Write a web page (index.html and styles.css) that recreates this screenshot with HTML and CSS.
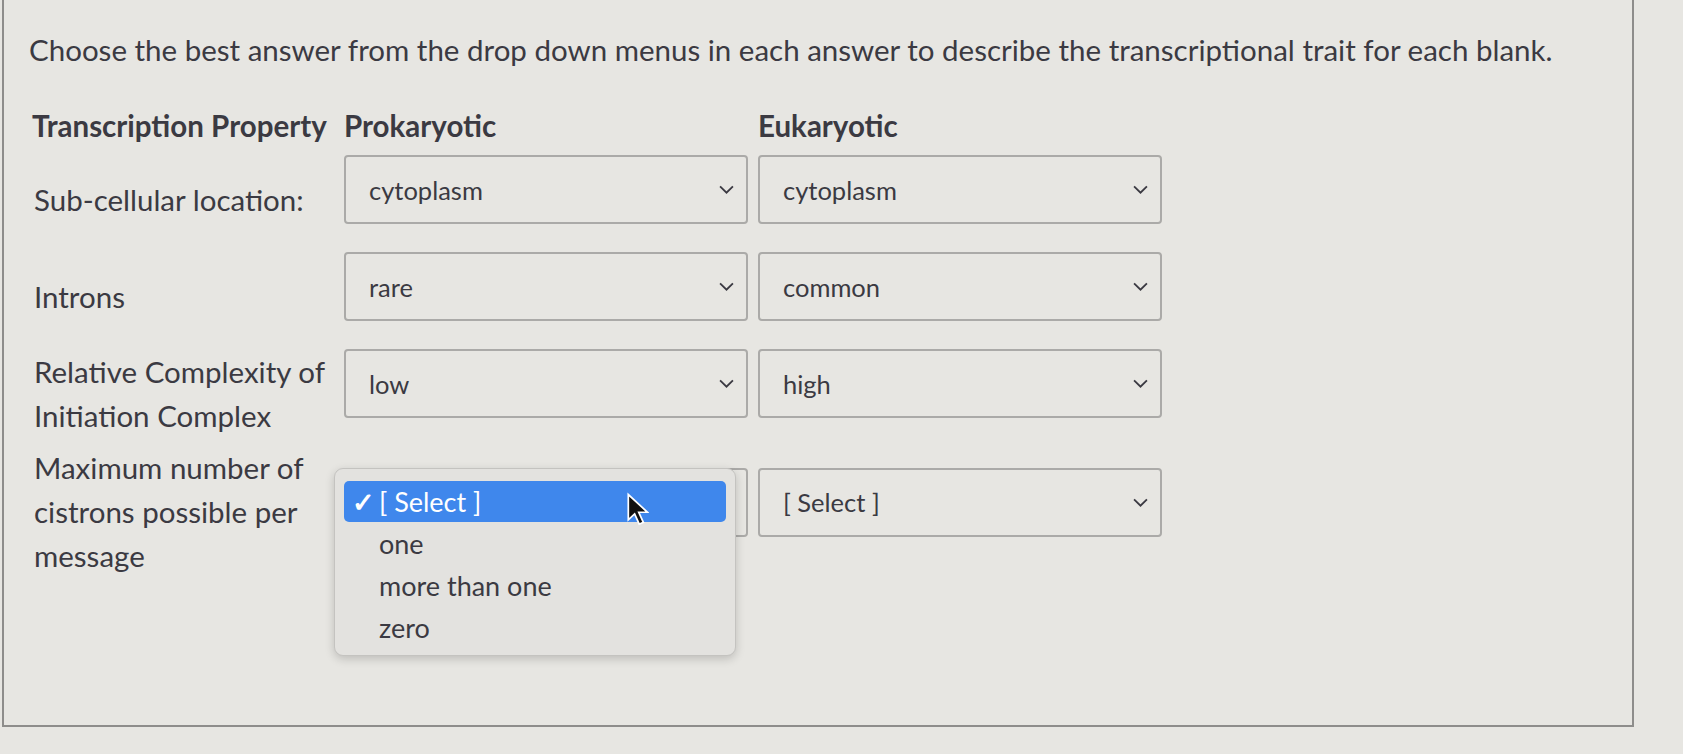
FILE: index.html
```html
<!DOCTYPE html>
<html lang="en">

<head>
    <meta charset="UTF-8">
    <meta name="viewport" content="width=device-width, initial-scale=1.0">
    <title>Transcription Quiz</title>
    <link rel="stylesheet" href="styles.css">
</head>

<body>
    <div class="question">
        <p class="prompt">Choose the best answer from the drop down menus in each answer to describe the transcriptional trait for each blank.</p>

        <div class="grid">
            <div class="head">Transcription Property</div>
            <div class="head">Prokaryotic</div>
            <div class="head">Eukaryotic</div>

            <div class="label">Sub-cellular location:</div>
            <div class="select"><span>cytoplasm</span><svg class="chev" viewBox="0 0 14 8"><path d="M1 1l6 6 6-6" /></svg></div>
            <div class="select"><span>cytoplasm</span><svg class="chev" viewBox="0 0 14 8"><path d="M1 1l6 6 6-6" /></svg></div>

            <div class="label">Introns</div>
            <div class="select"><span>rare</span><svg class="chev" viewBox="0 0 14 8"><path d="M1 1l6 6 6-6" /></svg></div>
            <div class="select"><span>common</span><svg class="chev" viewBox="0 0 14 8"><path d="M1 1l6 6 6-6" /></svg></div>

            <div class="label">Relative Complexity of<br>Initiation Complex</div>
            <div class="select"><span>low</span><svg class="chev" viewBox="0 0 14 8"><path d="M1 1l6 6 6-6" /></svg></div>
            <div class="select"><span>high</span><svg class="chev" viewBox="0 0 14 8"><path d="M1 1l6 6 6-6" /></svg></div>

            <div class="label">Maximum number of<br>cistrons possible per<br>message</div>
            <div class="open-wrap">
                <div class="select"><span class="hidden-value">[ Select ]</span><svg class="chev" viewBox="0 0 14 8"><path d="M1 1l6 6 6-6" /></svg></div>
                <ul class="menu">
                    <li class="picked"><span class="tick">✓</span>[ Select ]</li>
                    <li>one</li>
                    <li>more than one</li>
                    <li>zero</li>
                </ul>
                <svg class="cursor" viewBox="0 0 20 30"><path d="M2 2v22l5.5-5.2 4 9 3.6-1.6-4-8.8h7.6z" /></svg>
            </div>
            <div class="select"><span>[ Select ]</span><svg class="chev" viewBox="0 0 14 8"><path d="M1 1l6 6 6-6" /></svg></div>
        </div>
    </div>
</body>

</html>
```

FILE: styles.css
```css
body {
    margin: 0;
    background-color: #e7e6e2;
    font-family: Lato, "Open Sans", sans-serif;
    color: #3b3a42;
}

.question {
    margin-left: 2px;
    width: 1628px;
    height: 695px;
    padding-top: 30px;
    border: 2px solid #8e8d8b;
    border-top: none;
}

.prompt {
    margin: 0 0 34px 25px;
    font-size: 29.5px;
    line-height: 40px;
}

.grid {
    display: grid;
    grid-template-columns: 302px 404px 404px;
    column-gap: 10px;
    row-gap: 8px;
    align-items: center;
    margin-left: 28px;
}

.head {
    font-weight: bold;
    font-size: 29.5px;
    line-height: 43px;
}

.label {
    font-size: 29.5px;
    line-height: 44px;
    padding-left: 2px;
    white-space: nowrap;
}

.select {
    display: flex;
    align-items: center;
    justify-content: space-between;
    box-sizing: border-box;
    height: 69px;
    margin-bottom: 20px;
    padding: 0 12px 0 23px;
    border: 2px solid #abaaa8;
    border-radius: 4px;
    font-size: 25.5px;
}

.hidden-value {
    visibility: hidden;
}

.chev {
    width: 15px;
    height: 9px;
    fill: none;
    stroke: #3b3a42;
    stroke-width: 1.7;
}

.open-wrap {
    position: relative;
}

.menu {
    position: absolute;
    top: 0;
    left: -10px;
    width: 402px;
    height: 188px;
    box-sizing: border-box;
    margin: 0;
    padding: 12px 9px 0 9px;
    list-style: none;
    background-color: #e3e2df;
    border: 1px solid #c4c3c0;
    border-radius: 9px;
    box-shadow: 0 3px 10px rgba(0, 0, 0, 0.18);
    font-size: 27px;
}

.menu li {
    height: 42px;
    line-height: 42px;
    padding-left: 35px;
    position: relative;
}

.menu .picked {
    height: 41px;
    line-height: 41px;
    margin-bottom: 1px;
    background-color: #3f87ec;
    border-radius: 5px;
    color: #fff;
}

.tick {
    position: absolute;
    left: 8px;
    font-weight: bold;
}

.cursor {
    position: absolute;
    left: 282px;
    top: 24px;
    width: 23px;
    height: 35px;
    fill: #111;
    stroke: #fff;
    stroke-width: 1.5;
}
```
